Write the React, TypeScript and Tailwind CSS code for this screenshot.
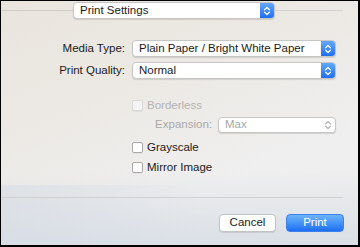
import React from "react";

function Chevrons({ color = "white" }: { color?: string }) {
  return (
    <svg width="8" height="10" viewBox="0 0 8 10" fill="none">
      <path d="M1.6 3.8 L4 1.5 L6.4 3.8" stroke={color} strokeWidth="1.2" strokeLinecap="round" strokeLinejoin="round" />
      <path d="M1.6 6.2 L4 8.5 L6.4 6.2" stroke={color} strokeWidth="1.2" strokeLinecap="round" strokeLinejoin="round" />
    </svg>
  );
}

function Popup({ text, w, h = 17, disabled = false }: { text: string; w: number; h?: number; disabled?: boolean }) {
  return (
    <div
      className="flex items-stretch rounded-[4px] bg-white border border-[#c6c6c6] shadow-[0_1px_1px_rgba(0,0,0,0.12)] overflow-hidden"
      style={{ width: w, height: h }}
    >
      <div className={`flex-1 flex items-center pl-[6px] text-[11.5px] leading-none whitespace-nowrap ${disabled ? "text-[#a8a8a8]" : "text-[#1a1a1a]"}`}>
        {text}
      </div>
      {disabled ? (
        <div className="w-[14px] flex items-center justify-center">
          <Chevrons color="#b5b5b5" />
        </div>
      ) : (
        <div className="w-[14px] flex items-center justify-center bg-gradient-to-b from-[#63a8fb] to-[#1f6ef0]">
          <Chevrons />
        </div>
      )}
    </div>
  );
}

function Check({ label, disabled = false }: { label: string; disabled?: boolean }) {
  return (
    <div className="flex items-center gap-[4px] h-[11px]">
      <div
        className={`w-[11px] h-[11px] rounded-[2px] border ${disabled ? "border-[#d9d9d9] bg-[#f4f4f4]" : "border-[#a9a9a9] bg-white"} shadow-[0_0.5px_0.5px_rgba(0,0,0,0.1)]`}
      />
      <span className={`text-[11.5px] leading-none whitespace-nowrap ${disabled ? "text-[#b3b3b3]" : "text-[#1a1a1a]"}`}>{label}</span>
    </div>
  );
}

export default function App() {
  return (
    <div
      className="w-[360px] h-[247px] bg-black pt-[1px] pl-[1px] pr-[2px] pb-[2px]"
      style={{ fontFamily: '"Liberation Sans", Arial, sans-serif' }}
    >
      <div className="w-full h-full flex flex-col bg-[linear-gradient(160deg,#e9e5dd_0%,#ece9e4_35%,#efefef_70%,#ececec_100%)] relative overflow-hidden">
        <div className="absolute inset-0 bg-[linear-gradient(to_top,rgba(210,218,228,0.7)_0%,rgba(210,218,228,0)_30%)] pointer-events-none" />
        <div className="absolute left-0 bottom-0 w-[200px] h-[60px] bg-[linear-gradient(to_right,rgba(214,220,229,0.6),rgba(214,220,229,0))] pointer-events-none" />
        <div className="relative flex flex-col h-full">
          {/* header */}
          <div className="flex items-center mt-[1px] h-[17px]">
            <div className="w-[72px] h-px bg-[#cfccc6]" />
            <Popup text="Print Settings" w={202} />
            <div className="w-[68px] h-px bg-[#d2d2d2]" />
          </div>

          {/* media type */}
          <div className="flex items-center mt-[21px] h-[17px]">
            <div className="w-[124px] text-right text-[11.5px] leading-none text-[#1a1a1a] whitespace-nowrap">Media Type:</div>
            <div className="ml-[7px]">
              <Popup text="Plain Paper / Bright White Paper" w={204} />
            </div>
          </div>
          <div className="flex items-center mt-[5px] h-[17px]">
            <div className="w-[124px] text-right text-[11.5px] leading-none text-[#1a1a1a] whitespace-nowrap">Print Quality:</div>
            <div className="ml-[7px]">
              <Popup text="Normal" w={204} />
            </div>
          </div>

          {/* borderless */}
          <div className="ml-[131px] mt-[21px]">
            <Check label="Borderless" disabled />
          </div>
          <div className="flex items-center mt-[6px] h-[16px]">
            <div className="w-[211px] text-right text-[11.5px] leading-none text-[#a9a9a9] whitespace-nowrap">Expansion:</div>
            <div className="ml-[6px]">
              <Popup text="Max" w={118} h={16} disabled />
            </div>
          </div>
          <div className="ml-[131px] mt-[9px]">
            <Check label="Grayscale" />
          </div>
          <div className="ml-[131px] mt-[9px]">
            <Check label="Mirror Image" />
          </div>

          {/* divider */}
          <div className="mt-[24px] w-[342px] h-px bg-[#d0d0d0]" />

          {/* buttons */}
          <div className="flex mt-[16px] ml-[218px] gap-[10px]">
            <div className="w-[57px] h-[18px] rounded-[4px] bg-white border border-[#c3c3c3] shadow-[0_1px_1px_rgba(0,0,0,0.1)] flex items-center justify-center text-[11.5px] leading-none text-[#1a1a1a]">
              Cancel
            </div>
            <div className="w-[58px] h-[18px] rounded-[4px] bg-gradient-to-b from-[#6db4fb] to-[#1c6ef0] border border-[#3b82f0] flex items-center justify-center text-[11.5px] leading-none text-white">
              Print
            </div>
          </div>
        </div>
      </div>
    </div>
  );
}
